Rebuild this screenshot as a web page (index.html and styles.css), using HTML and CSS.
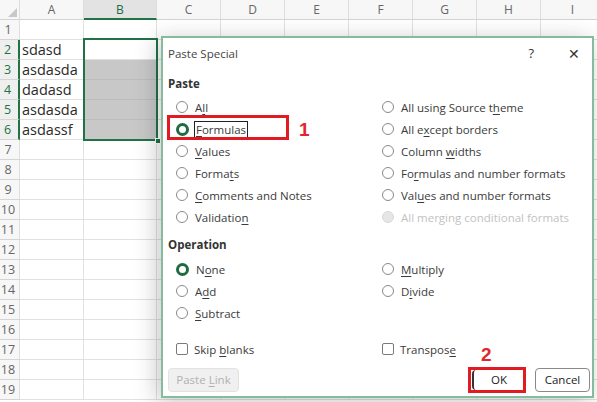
FILE: index.html
```html
<!DOCTYPE html>
<html>
<head>
<meta charset="utf-8">
<link rel="stylesheet" href="styles.css">
</head>
<body>
<div class="page">
  <div class="sheet">
    <div class="corner"></div><div class="ch">A</div><div class="ch on">B</div><div class="ch">C</div><div class="ch">D</div><div class="ch">E</div><div class="ch">F</div><div class="ch">G</div><div class="ch">H</div><div class="ch">I</div>
    <div class="rh">1</div><div class="c"></div><div class="c"></div><div class="c"></div><div class="c"></div><div class="c"></div><div class="c"></div><div class="c"></div><div class="c"></div><div class="c"></div>
    <div class="rh on">2</div><div class="c t">sdasd</div><div class="c"></div><div class="c"></div><div class="c"></div><div class="c"></div><div class="c"></div><div class="c"></div><div class="c"></div><div class="c"></div>
    <div class="rh on">3</div><div class="c t">asdasda</div><div class="c g"></div><div class="c"></div><div class="c"></div><div class="c"></div><div class="c"></div><div class="c"></div><div class="c"></div><div class="c"></div>
    <div class="rh on">4</div><div class="c t">dadasd</div><div class="c g"></div><div class="c"></div><div class="c"></div><div class="c"></div><div class="c"></div><div class="c"></div><div class="c"></div><div class="c"></div>
    <div class="rh on">5</div><div class="c t">asdasda</div><div class="c g"></div><div class="c"></div><div class="c"></div><div class="c"></div><div class="c"></div><div class="c"></div><div class="c"></div><div class="c"></div>
    <div class="rh on">6</div><div class="c t">asdassf</div><div class="c g"></div><div class="c"></div><div class="c"></div><div class="c"></div><div class="c"></div><div class="c"></div><div class="c"></div><div class="c"></div>
    <div class="rh">7</div><div class="c"></div><div class="c"></div><div class="c"></div><div class="c"></div><div class="c"></div><div class="c"></div><div class="c"></div><div class="c"></div><div class="c"></div>
    <div class="rh">8</div><div class="c"></div><div class="c"></div><div class="c"></div><div class="c"></div><div class="c"></div><div class="c"></div><div class="c"></div><div class="c"></div><div class="c"></div>
    <div class="rh">9</div><div class="c"></div><div class="c"></div><div class="c"></div><div class="c"></div><div class="c"></div><div class="c"></div><div class="c"></div><div class="c"></div><div class="c"></div>
    <div class="rh">10</div><div class="c"></div><div class="c"></div><div class="c"></div><div class="c"></div><div class="c"></div><div class="c"></div><div class="c"></div><div class="c"></div><div class="c"></div>
    <div class="rh">11</div><div class="c"></div><div class="c"></div><div class="c"></div><div class="c"></div><div class="c"></div><div class="c"></div><div class="c"></div><div class="c"></div><div class="c"></div>
    <div class="rh">12</div><div class="c"></div><div class="c"></div><div class="c"></div><div class="c"></div><div class="c"></div><div class="c"></div><div class="c"></div><div class="c"></div><div class="c"></div>
    <div class="rh">13</div><div class="c"></div><div class="c"></div><div class="c"></div><div class="c"></div><div class="c"></div><div class="c"></div><div class="c"></div><div class="c"></div><div class="c"></div>
    <div class="rh">14</div><div class="c"></div><div class="c"></div><div class="c"></div><div class="c"></div><div class="c"></div><div class="c"></div><div class="c"></div><div class="c"></div><div class="c"></div>
    <div class="rh">15</div><div class="c"></div><div class="c"></div><div class="c"></div><div class="c"></div><div class="c"></div><div class="c"></div><div class="c"></div><div class="c"></div><div class="c"></div>
    <div class="rh">16</div><div class="c"></div><div class="c"></div><div class="c"></div><div class="c"></div><div class="c"></div><div class="c"></div><div class="c"></div><div class="c"></div><div class="c"></div>
    <div class="rh">17</div><div class="c"></div><div class="c"></div><div class="c"></div><div class="c"></div><div class="c"></div><div class="c"></div><div class="c"></div><div class="c"></div><div class="c"></div>
    <div class="rh">18</div><div class="c"></div><div class="c"></div><div class="c"></div><div class="c"></div><div class="c"></div><div class="c"></div><div class="c"></div><div class="c"></div><div class="c"></div>
    <div class="rh">19</div><div class="c"></div><div class="c"></div><div class="c"></div><div class="c"></div><div class="c"></div><div class="c"></div><div class="c"></div><div class="c"></div><div class="c"></div>
  </div>

  <div class="selection"><span class="handle"></span></div>

  <div class="dialog">
    <div class="dlg-title">
      <span>Paste Special</span>
      <span class="dlg-actions"><span class="help">?</span><span class="close">✕</span></span>
    </div>

    <div class="heading">Paste</div>
    <div class="options">
      <label class="opt"><span class="radio"></span><span>A<u>l</u>l</span></label>
      <label class="opt"><span class="radio"></span><span>All using Source t<u>h</u>eme</span></label>
      <label class="opt"><span class="radio on"></span><span class="focus"><u>F</u>ormulas</span></label>
      <label class="opt"><span class="radio"></span><span>All e<u>x</u>cept borders</span></label>
      <label class="opt"><span class="radio"></span><span><u>V</u>alues</span></label>
      <label class="opt"><span class="radio"></span><span>Column <u>w</u>idths</span></label>
      <label class="opt"><span class="radio"></span><span>Forma<u>t</u>s</span></label>
      <label class="opt"><span class="radio"></span><span>Fo<u>r</u>mulas and number formats</span></label>
      <label class="opt"><span class="radio"></span><span><u>C</u>omments and Notes</span></label>
      <label class="opt"><span class="radio"></span><span>Val<u>u</u>es and number formats</span></label>
      <label class="opt"><span class="radio"></span><span>Validatio<u>n</u></span></label>
      <label class="opt disabled"><span class="radio"></span><span>All merging conditional formats</span></label>
    </div>

    <div class="heading op">Operation</div>
    <div class="options">
      <label class="opt"><span class="radio on"></span><span>N<u>o</u>ne</span></label>
      <label class="opt"><span class="radio"></span><span><u>M</u>ultiply</span></label>
      <label class="opt"><span class="radio"></span><span>A<u>d</u>d</span></label>
      <label class="opt"><span class="radio"></span><span>D<u>i</u>vide</span></label>
      <label class="opt"><span class="radio"></span><span><u>S</u>ubtract</span></label>
      <span></span>
    </div>

    <div class="options checks">
      <label class="opt"><span class="check"></span><span>Skip <u>b</u>lanks</span></label>
      <label class="opt"><span class="check"></span><span>Transpos<u>e</u></span></label>
    </div>

    <div class="buttons">
      <span class="btn link"><span>Paste <u>L</u>ink</span></span>
      <span class="spacer"></span>
      <span class="btn ok">OK</span>
      <span class="btn cancel">Cancel</span>
    </div>
  </div>

  <div class="mark mark-formulas"></div>
  <div class="num num1">1</div>
  <div class="mark mark-ok"></div>
  <div class="num num2">2</div>
</div>
</body>
</html>
```

FILE: styles.css
```css
* { box-sizing: border-box; }
html, body { margin: 0; padding: 0; background: #fff; overflow: hidden; }
.page {
  position: relative;
  width: 597px;
  height: 402px;
  overflow: hidden;
  font-family: "Open Sans", "Noto Sans", sans-serif;
}

.sheet {
  display: grid;
  grid-template-columns: 20px 64px 73px repeat(7, 64px);
  grid-auto-rows: 20px;
}
.corner, .ch, .rh {
  background: #f7f7f7;
  color: #666;
  border-right: 1px solid #dedede;
  border-bottom: 1px solid #d4d4d4;
}
.corner { position: relative; }
.corner::after {
  content: "";
  position: absolute;
  right: 2px;
  bottom: 2px;
  border-left: 9px solid transparent;
  border-bottom: 9px solid #c8c8c8;
}
.ch {
  display: flex;
  align-items: center;
  justify-content: center;
  font-size: 12px;
}
.ch.on {
  background: #e3e3e3;
  color: #1f6b42;
  border-bottom: 2px solid #217346;
}
.rh {
  display: flex;
  align-items: center;
  justify-content: center;
  font-size: 12.5px;
  padding-right: 3px;
}
.rh.on {
  color: #217346;
  border-right: 2px solid #217346;
  background: #efefef;
}
.c {
  border-right: 1px solid #e1e1e1;
  border-bottom: 1px solid #e1e1e1;
  font-size: 14.5px;
  color: #2a2a2a;
  line-height: 19px;
  padding-left: 2px;
  white-space: nowrap;
}
.c.g { background: #c8c8c8; border-bottom-color: #bcbcbc; border-right-color: #bcbcbc; }

.selection {
  position: absolute;
  left: 83px;
  top: 38px;
  width: 75px;
  height: 103px;
  border: 2px solid #217346;
}
.handle {
  position: absolute;
  right: -5px;
  bottom: -5px;
  width: 6px;
  height: 6px;
  background: #217346;
  border: 1px solid #fff;
}

.dialog {
  position: absolute;
  left: 161px;
  top: 36px;
  width: 433px;
  height: 362px;
  background: #fff;
  border: 2px solid #86bc9d;
  box-shadow: -4px 4px 22px rgba(0, 0, 0, 0.22);
  color: #333;
  font-size: 11.5px;
}
.dlg-title {
  height: 30px;
  display: flex;
  align-items: center;
  justify-content: space-between;
  padding: 0 12px 0 5px;
  color: #444;
}
.dlg-actions { display: flex; align-items: center; gap: 34px; }
.help { font-size: 13px; color: #333; }
.close { font-size: 14px; color: #333; }

.heading {
  margin: 8px 0 0 5px;
  height: 16px;
  line-height: 16px;
  font-weight: 700;
  color: #333;
}
.heading.op { margin-top: 9px; }

.options {
  display: grid;
  grid-template-columns: 206px 1fr;
  grid-auto-rows: 22px;
  padding-left: 13px;
  margin-top: 4px;
}
.heading.op + .options { margin-top: 5px; }
.options.checks { margin-top: 14px; }

.opt {
  display: flex;
  align-items: center;
  white-space: nowrap;
  color: #3a3a3a;
}
u { text-decoration-thickness: 1px; text-underline-offset: 2px; }
.radio {
  width: 12px;
  height: 12px;
  border-radius: 50%;
  border: 1px solid #8a8a8a;
  background: #fff;
  margin-right: 7px;
  flex: none;
}
.radio.on {
  width: 13px;
  height: 13px;
  border: 3.5px solid #1e6b41;
}
.opt.disabled { color: #c2c2c2; }
.opt.disabled .radio { background: #e6e6e6; border-color: #d8d8d8; }
.check {
  width: 12px;
  height: 12px;
  border: 1px solid #7a7a7a;
  border-radius: 2px;
  margin-right: 6px;
  flex: none;
}
.focus {
  border: 1px solid #222;
  padding: 0 1px;
  margin-left: -2px;
  line-height: 15px;
}

.buttons {
  display: flex;
  align-items: center;
  margin-top: 7px;
  padding: 0 2px 0 5px;
  height: 25px;
}
.spacer { flex: 1; }
.btn {
  display: flex;
  align-items: center;
  justify-content: center;
  height: 24px;
  border-radius: 4px;
  font-size: 11.5px;
}
.btn.link {
  width: 71px;
  background: #f0f0f0;
  border: 1px solid #e2e2e2;
  color: #b0b0b0;
}
.btn.ok {
  width: 52px;
  height: 20px;
  margin-right: 11px;
  border-left: 2px solid #333;
  color: #222;
}
.btn.cancel {
  width: 55px;
  border: 1px solid #8a8a8a;
  color: #222;
}

.mark {
  position: absolute;
  border: 3px solid #e21a22;
}
.mark-formulas { left: 167px; top: 115px; width: 122px; height: 25px; }
.mark-ok { left: 468px; top: 367px; width: 58px; height: 26px; }
.num {
  position: absolute;
  color: #e0282c;
  font-family: "Liberation Sans", Arial, sans-serif;
  font-weight: 700;
  font-size: 19px;
  line-height: 20px;
}
.num1 { left: 299px; top: 120px; }
.num2 { left: 481px; top: 345px; }
```
